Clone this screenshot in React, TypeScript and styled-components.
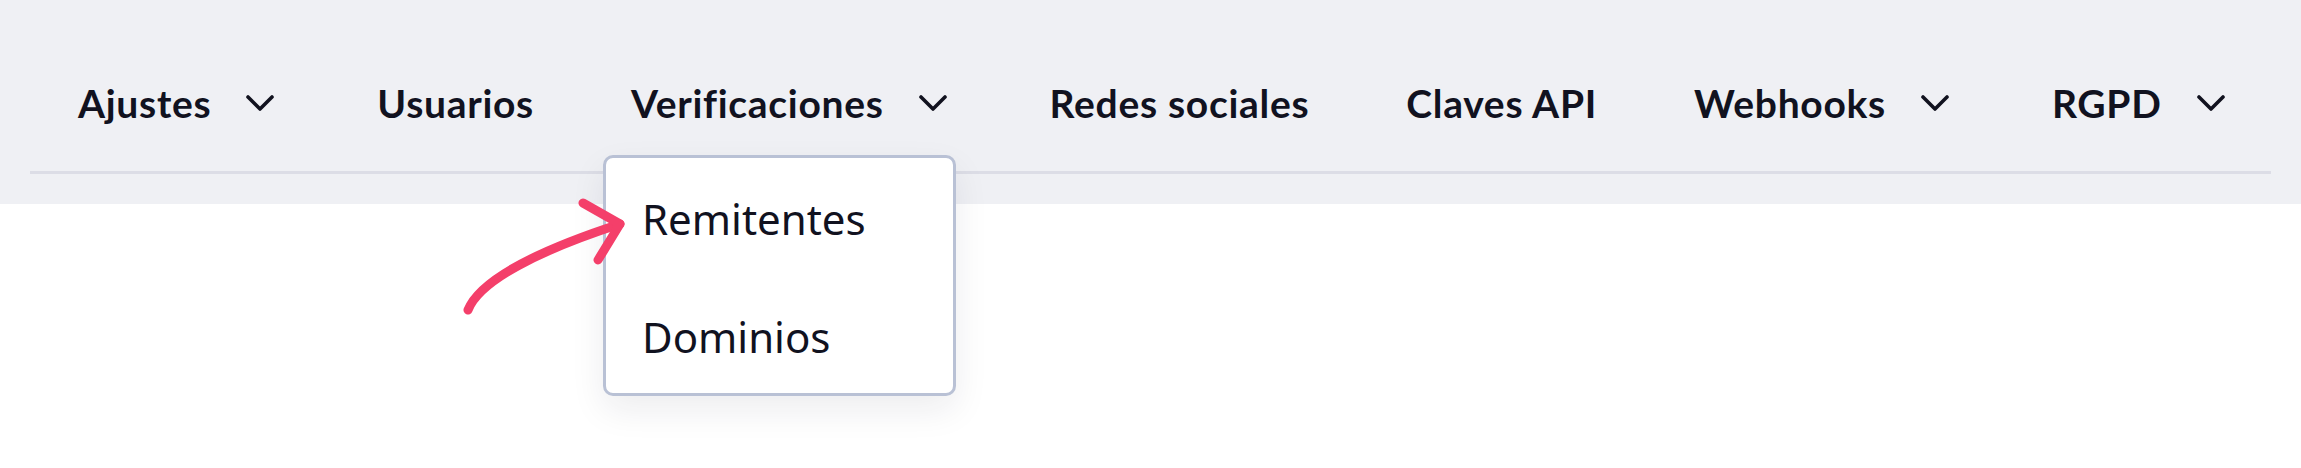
import React from 'react'
import styled, {createGlobalStyle} from 'styled-components'

const GlobalStyle = createGlobalStyle`
  html, body {
    margin: 0;
    padding: 0;
    background: #ffffff;
  }
  body {
    font-family: Lato, "Noto Sans", sans-serif;
    color: #11121f;
  }
`

const Page = styled.div`
  position: relative;
  width: 2301px;
  height: 468px;
  background: #ffffff;
`

const Header = styled.header`
  background: #eff0f4;
  padding: 74px 30px 30px;
`

const Nav = styled.nav`
  display: flex;
  align-items: center;
  gap: 97px;
  padding-left: 48px;
  height: 58px;
`

const NavItem = styled.div`
  position: relative;
  display: flex;
  align-items: center;
  font-size: 39px;
  font-weight: 700;
  letter-spacing: 0.7px;
  line-height: 58px;
  white-space: nowrap;
`

const Chevron = styled.span`
  display: inline-flex;
  justify-content: center;
  align-items: center;
  width: 40px;
  height: 40px;
  margin-left: 29px;
`

const Divider = styled.div`
  margin-top: 39px;
  height: 3px;
  background: #dcdde6;
`

const Menu = styled.div`
  position: absolute;
  top: 81px;
  left: -28px;
  width: 347px;
  padding-top: 4px;
  display: flex;
  flex-direction: column;
  gap: 5px;
  background: #ffffff;
  border: 3px solid #b9c1d5;
  border-radius: 10px;
  box-shadow: 0 14px 34px rgba(20, 24, 48, 0.08);
  z-index: 2;
`

const MenuItem = styled.div`
  display: flex;
  align-items: center;
  height: 113px;
  padding: 0 36px;
  font-family: "Noto Sans", Lato, sans-serif;
  font-size: 42px;
  font-weight: 400;
  letter-spacing: 0;
`

const Pointer = styled.svg`
  position: absolute;
  left: 450px;
  top: 190px;
  z-index: 3;
`

type Item = {label: string; menu?: boolean; options?: string[]}

const items: Item[] = [
  {label: 'Ajustes', menu: true},
  {label: 'Usuarios'},
  {label: 'Verificaciones', menu: true, options: ['Remitentes', 'Dominios']},
  {label: 'Redes sociales'},
  {label: 'Claves API'},
  {label: 'Webhooks', menu: true},
  {label: 'RGPD', menu: true},
]

const ChevronDown = () => (
  <svg width="28" height="17" viewBox="0 0 28 17" fill="none">
    <polyline
      points="2,2 14,14 26,2"
      stroke="#11121f"
      strokeWidth="3.6"
      strokeLinecap="round"
      strokeLinejoin="round"
    />
  </svg>
)

export default function App() {
  return (
    <Page>
      <GlobalStyle />
      <Header>
        <Nav>
          {items.map((item) => (
            <NavItem key={item.label}>
              {item.label}
              {item.menu && (
                <Chevron>
                  <ChevronDown />
                </Chevron>
              )}
              {item.options && (
                <Menu>
                  {item.options.map((opt) => (
                    <MenuItem key={opt}>{opt}</MenuItem>
                  ))}
                </Menu>
              )}
            </NavItem>
          ))}
        </Nav>
        <Divider />
      </Header>
      {/* hand-drawn arrow pointing at the first submenu entry */}
      <Pointer width="190" height="135" viewBox="0 0 190 135" fill="none">
        <path
          d="M18 120 C30 90 90 60 170 34"
          stroke="#f43f6a"
          strokeWidth="9"
          strokeLinecap="round"
        />
        <path
          d="M133 13 L170 34 L148 70"
          stroke="#f43f6a"
          strokeWidth="9"
          strokeLinecap="round"
          strokeLinejoin="round"
        />
      </Pointer>
    </Page>
  )
}
